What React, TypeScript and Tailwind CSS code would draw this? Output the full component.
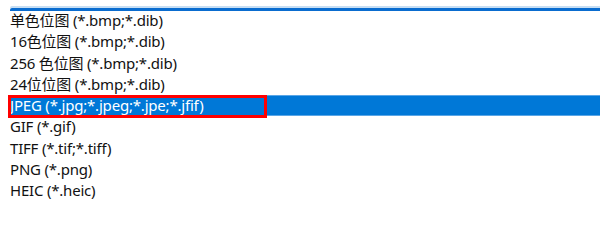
import React from 'react';

const items = [
  '单色位图 (*.bmp;*.dib)',
  '16色位图 (*.bmp;*.dib)',
  '256 色位图 (*.bmp;*.dib)',
  '24位位图 (*.bmp;*.dib)',
  'JPEG (*.jpg;*.jpeg;*.jpe;*.jfif)',
  'GIF (*.gif)',
  'TIFF (*.tif;*.tiff)',
  'PNG (*.png)',
  'HEIC (*.heic)',
];

const SELECTED = 4;

export default function App() {
  return (
    <div
      className="w-[600px] h-[241px] bg-white overflow-hidden"
      style={{ fontFamily: '"Noto Sans", "Noto Sans CJK SC", sans-serif' }}
    >
      {/* top edge of the combo box */}
      <div className="pt-[6px] pl-[10px]">
        <div className="h-[2px] bg-[#c7def3] rounded-tl-[3px]" />
        <div className="h-[3px] bg-[#0a6ccf] rounded-tl-[2px]" />
      </div>
      <ul className="-mt-px">
        {items.map((label, i) =>
          i === SELECTED ? (
            <li key={label} className="relative h-[21.25px] ml-[9px] bg-[#0078d7] border-y border-[#5aa6e6] flex items-center">
              <span className="text-white text-[15px] leading-none pl-[1px] tracking-[-0.2px]">{label}</span>
              <div className="absolute left-[-1px] top-[-1px] w-[259px] h-[23px] border-[3px] border-[#ff0000]" />
            </li>
          ) : (
            <li key={label} className="h-[21.25px] pl-[10px] flex items-center text-[15px] leading-none text-[#111111] tracking-[-0.2px]">
              {label}
            </li>
          )
        )}
      </ul>
    </div>
  );
}
